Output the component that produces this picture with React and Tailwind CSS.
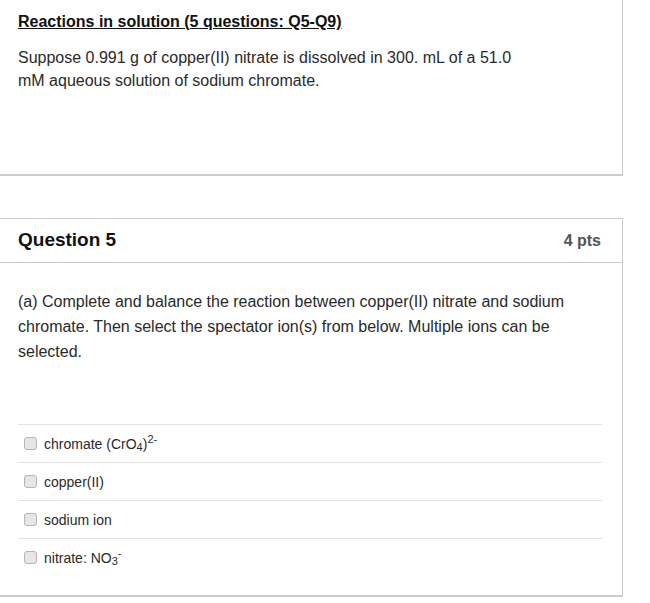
const options = [
  { key: 'chromate', label: (<>chromate (CrO<sub className="text-[11px]">4</sub>)<sup className="text-[11px]">2-</sup></>) },
  { key: 'copper', label: 'copper(II)' },
  { key: 'sodium', label: 'sodium ion' },
  { key: 'nitrate', label: (<>nitrate: NO<sub className="text-[11px]">3</sub><sup className="text-[11px]">-</sup></>) },
];

export default function App() {
  return (
    <div className="w-[650px] h-[603px] overflow-hidden bg-white text-[#2a2a2a] font-['Liberation_Sans',Arial,sans-serif]">
      <div className="w-[623px] h-[176px] border-r border-b-2 border-[#c7cdd1] pl-[18px] pt-[12px]">
        <h2 className="text-[16px] leading-[20px] font-bold underline text-[#111]">Reactions in solution (5 questions: Q5-Q9)</h2>
        <p className="mt-[14px] w-[510px] text-[16px] leading-[23px]">Suppose 0.991 g of copper(II) nitrate is dissolved in 300. mL of a 51.0 mM aqueous solution of sodium chromate.</p>
      </div>

      <div className="mt-[42px] w-[623px] border-t border-r border-b-2 border-[#c7cdd1]">
        <div className="h-[44px] flex items-center justify-between pl-[18px] pr-[21px] border-b border-[#c7cdd1]">
          <span className="text-[19px] font-bold text-[#111]">Question 5</span>
          <span className="text-[16px] font-bold text-[#555]">4 pts</span>
        </div>
        <div className="pl-[18px] pt-[26px] pb-[19px]">
          <p className="w-[580px] text-[16px] leading-[25px]">(a) Complete and balance the reaction between copper(II) nitrate and sodium chromate. Then select the spectator ion(s) from below. Multiple ions can be selected.</p>
          <div className="mt-[60px] w-[584px]">
            {options.map((o) => (
              <div key={o.key} className="h-[38px] border-t border-[#e3e3e3] flex items-center pl-[6px] gap-[7px] text-[14px]">
                <span className="w-[13px] h-[13px] rounded-[3px] border border-[#b5b5b5] bg-[#e6e6e6] shrink-0" />
                <span className="leading-[18px]">{o.label}</span>
              </div>
            ))}
          </div>
        </div>
      </div>
    </div>
  );
}
